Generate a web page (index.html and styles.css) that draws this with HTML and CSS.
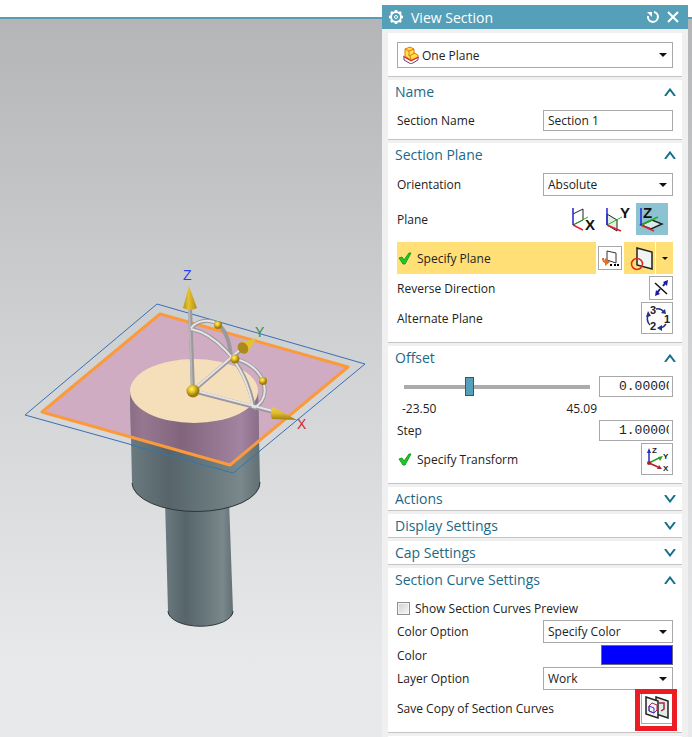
FILE: index.html
```html
<!DOCTYPE html>
<html lang="en">
<head>
  <meta charset="UTF-8" />
  <meta name="viewport" content="width=device-width, initial-scale=1.0" />
  <title>View Section</title>
  <link rel="stylesheet" href="styles.css">
</head>
<body>
  <main class="viewport">
    <svg class="scene" viewBox="0 19 382 718" preserveAspectRatio="xMinYMin meet" role="img" aria-label="Sectioned part">
      <defs>
        <linearGradient id="steel">
          <stop offset="0" stop-color="#6b7a7f" />
          <stop offset="0.3" stop-color="#57656a" />
          <stop offset="0.6" stop-color="#68777b" />
          <stop offset="0.85" stop-color="#7a888c" />
          <stop offset="1" stop-color="#617074" />
        </linearGradient>
        <linearGradient id="tinted">
          <stop offset="0" stop-color="#8a6d86" />
          <stop offset="0.1" stop-color="#967790" />
          <stop offset="0.4" stop-color="#82647d" />
          <stop offset="0.85" stop-color="#a384a0" />
          <stop offset="1" stop-color="#8a6c88" />
        </linearGradient>
        <linearGradient id="gold">
          <stop offset="0" stop-color="#b8931c" />
          <stop offset="0.4" stop-color="#e6c22f" />
          <stop offset="1" stop-color="#b08d1a" />
        </linearGradient>
        <linearGradient id="goldX" x2="0" y2="1">
          <stop offset="0" stop-color="#f0cf3c" />
          <stop offset="0.5" stop-color="#dcb92c" />
          <stop offset="1" stop-color="#9c7c14" />
        </linearGradient>
        <radialGradient id="ball" cx="0.4" cy="0.35">
          <stop offset="0" stop-color="#fff07a" />
          <stop offset="0.5" stop-color="#e5c122" />
          <stop offset="1" stop-color="#9c7d10" />
        </radialGradient>
        <clipPath id="planeClip">
          <path d="M160 314L348 367L230 465L42 412Z" />
        </clipPath>
      </defs>

      <!-- section plane -->
      <path d="M157 304L365 364L233 473L25 415Z" fill="none" stroke="#3a6db5" />
      <path d="M160 314L348 367L230 465L42 412Z" fill="#cfacc1" />

      <!-- part -->
      <path d="M165 500L168 611A32 15 0 0 0 233 611L229 500Z" fill="url(#steel)" />
      <path d="M168 611A32 15 0 0 0 233 611" fill="none" stroke="#2d3639" />
      <path d="M130 391L132 483A64 29 0 0 0 260 482L258 391Z" fill="url(#steel)" />
      <path d="M132 483A64 29 0 0 0 260 482" fill="none" stroke="#2d3639" />
      <path d="M130 391L132 483A64 29 0 0 0 260 482L258 391Z" fill="url(#tinted)" clip-path="url(#planeClip)" />
      <ellipse cx="194" cy="391" rx="64" ry="32" fill="#f5dfbb" />
      <path d="M131 445L233 473L260 451" fill="none" stroke="#2f76b0" />
      <path d="M160 314L348 367L230 465L42 412Z" fill="none" stroke="#fb9a3c" stroke-width="3" stroke-linejoin="round" />

      <!-- manipulator -->
      <g fill="none" stroke="#9b999c" stroke-width="4">
        <path d="M193 391L190 308" />
        <path d="M193 391L242 349" />
        <path d="M193 391L273 412" />
        <path d="M191 329C196 321 208 318 218 324C226 331 230 341 231 358" />
        <path d="M191 329C211 333 245 358 254 408" />
        <path d="M235 359C247 362 259 370 263 381C267 393 264 402 254 409" />
      </g>
      <g fill="none" stroke="#e6e4e6" stroke-width="2">
        <path d="M192 391L189 308" stroke="#b5b4b6" />
        <path d="M193 390L242 348" />
        <path d="M193 390L273 411" />
        <path d="M191 328C196 321 208 318 218 324" />
        <path d="M191 329C211 333 244 357 253 408" />
        <path d="M235 359C247 361 259 370 263 381C267 393 264 402 254 408" />
      </g>
      <path d="M189 286L197 308Q190 312 183 308Z" fill="url(#gold)" />
      <path d="M257 338L240 343L247 353Z" fill="#e6c22f" />
      <ellipse cx="243" cy="348" rx="5" ry="6" transform="rotate(-35 243 348)" fill="#ab8a1b" />
      <path d="M297 420L273 407Q269 413 272 419Z" fill="url(#goldX)" />
      <circle cx="193" cy="391" r="6.5" fill="url(#ball)" />
      <circle cx="218" cy="325" r="4" fill="url(#ball)" />
      <circle cx="235" cy="359" r="4.5" fill="url(#ball)" />
      <circle cx="263" cy="381" r="4" fill="url(#ball)" />
      <text class="axis" x="183" y="280" fill="#2b3ff0">Z</text>
      <text class="axis" x="255" y="337" fill="#2f8f4e">Y</text>
      <text class="axis" x="297" y="429" fill="#d02a35">X</text>
    </svg>
  </main>

  <form class="dialog">
    <header class="titlebar">
      <svg width="16" height="16" viewBox="0 0 16 16" fill="none" stroke="#fff">
        <circle cx="8" cy="8" r="5" stroke-width="2" />
        <circle cx="8" cy="8" r="1.5" stroke-width="1" />
        <path d="M8 1v2M8 13v2M1 8h2M13 8h2M3 3l1.5 1.5M11.5 11.5L13 13M13 3l-1.5 1.5M4.5 11.5L3 13" stroke-width="2.5" />
      </svg>
      <h1>View Section</h1>
      <button type="button" class="tb-btn" aria-label="Reset">
        <svg width="14" height="14" viewBox="0 0 14 14" fill="none" stroke="#fff" stroke-width="2">
          <path d="M8 2A5 5 0 1 1 2 6" />
          <path d="M1 2h5v5Z" fill="#fff" stroke="none" />
        </svg>
      </button>
      <button type="button" class="tb-btn" aria-label="Close">
        <svg width="14" height="14" viewBox="0 0 14 14" stroke="#fff" stroke-width="2">
          <path d="M2 2l10 10M12 2L2 12" />
        </svg>
      </button>
    </header>

    <div class="sections">
      <section class="card type-card">
        <div class="combo">
          <svg width="18" height="18" viewBox="0 0 18 18">
            <path d="M2 11v3l7 4 7-4v-3l-7 3Z" fill="#fff" stroke="#7a3a7a" />
            <path d="M3 3l5-2 4 2v4l4 2v2l-7 3-6-4Z" fill="#ffe04a" stroke="#e07a10" />
            <path d="M3 3l4 2v5l6-3M7 5l5-2M8 10l1 4" fill="none" stroke="#e07a10" />
            <path d="M1 10l8 5 8-4" fill="none" stroke="#e02020" />
          </svg>
          <select aria-label="Type"><option>One Plane</option></select>
        </div>
      </section>

      <section class="card">
        <button type="button" class="head" aria-expanded="true">Name
          <svg class="chev" viewBox="0 0 12 8"><path d="M1 8L6 1.5L11 8" /></svg></button>
        <div class="rows">
          <div class="row">
            <label for="secName">Section Name</label>
            <input type="text" id="secName" class="field wide" value="Section 1" />
          </div>
        </div>
      </section>

      <section class="card">
        <button type="button" class="head" aria-expanded="true">Section Plane
          <svg class="chev" viewBox="0 0 12 8"><path d="M1 8L6 1.5L11 8" /></svg></button>
        <div class="rows">
          <div class="row">
            <label for="orient">Orientation</label>
            <div class="combo wide"><select id="orient"><option>Absolute</option></select></div>
          </div>
          <div class="row plane-row">
            <span class="label">Plane</span>
            <button type="button" class="plane-btn" aria-label="X plane">
              <svg width="32" height="32" viewBox="0 0 32 32" fill="none">
                <path d="M5 11L15 6V17L5 22" stroke="#222" />
                <path d="M5 22L20 14" stroke="#22b022" />
                <path d="M5 22L15 27" stroke="#e02030" stroke-width="1.5" />
                <path d="M5 5V22" stroke="#2222d8" stroke-width="1.5" />
                <text x="17" y="27" class="glyph">X</text>
              </svg>
            </button>
            <button type="button" class="plane-btn" aria-label="Y plane">
              <svg width="32" height="32" viewBox="0 0 32 32" fill="none">
                <path d="M5 11L15 17V28L5 22Z" fill="#dff0e0" stroke="#222" />
                <path d="M5 22L20 14" stroke="#22b022" />
                <path d="M5 22L19 28" stroke="#e02030" stroke-width="1.5" />
                <path d="M5 5V22" stroke="#2222d8" stroke-width="1.5" />
                <text x="18" y="15" class="glyph">Y</text>
              </svg>
            </button>
            <button type="button" class="plane-btn selected" aria-label="Z plane" aria-pressed="true">
              <svg width="32" height="32" viewBox="0 0 32 32" fill="none">
                <path d="M5 22L16 17L26 21L15 26Z" fill="#d8ecea" stroke="#222" stroke-width="1.5" />
                <path d="M5 22L22 14" stroke="#22b022" stroke-width="1.5" />
                <path d="M5 22L18 28" stroke="#e02030" stroke-width="1.5" />
                <path d="M5 5V22" stroke="#2222d8" stroke-width="1.5" />
                <text x="7" y="15" class="glyph">Z</text>
              </svg>
            </button>
          </div>
          <div class="row specify">
            <div class="active-step">
              <svg class="check" viewBox="0 0 14 14"><path d="M1 7l3-1 2 3 5-7 2 0L7 13H5Z" /></svg>
              <span>Specify Plane</span>
            </div>
            <button type="button" class="tool small" aria-label="Plane dialog">
              <svg width="22" height="22" viewBox="0 0 22 22" fill="none">
                <path d="M8 4l9 2v10l-9-3Z" stroke="#333" />
                <path d="M4 11c0 3 1 4 3 4" stroke="#e07020" stroke-width="2" />
                <path d="M6 11l5 4-5 4Z" fill="#e07020" />
                <path d="M11 18h2M15 18h2M18 18h2" stroke="#000" stroke-width="2" />
              </svg>
            </button>
            <div class="split">
              <button type="button" class="split-main" aria-label="Inferred plane">
                <svg width="30" height="32" viewBox="0 0 30 32" fill="none">
                  <path d="M12 6L27 10V27L12 23Z" fill="#eef5f2" stroke="#222" stroke-width="1.5" />
                  <circle cx="12" cy="22" r="5.5" stroke="#e02818" stroke-width="1.5" />
                </svg>
              </button>
              <button type="button" class="split-menu" aria-label="More plane types"></button>
            </div>
          </div>
          <div class="row">
            <span class="label">Reverse Direction</span>
            <button type="button" class="tool small" aria-label="Reverse Direction">
              <svg width="22" height="22" viewBox="0 0 22 22" fill="none">
                <path d="M5 6L17 17" stroke="#111" stroke-width="1.5" />
                <path d="M7 16l3-4M13 9l3-4" stroke="#1a1aa8" stroke-width="2" />
                <path d="M18 3l-1 6-4-4ZM5 19l1-6 4 4Z" fill="#1a1aa8" />
              </svg>
            </button>
          </div>
          <div class="row">
            <span class="label">Alternate Plane</span>
            <button type="button" class="tool" aria-label="Alternate Plane">
              <svg width="30" height="30" viewBox="0 0 30 30" fill="none">
                <path d="M14 6q5-1 8 3M24 21q-2 3-5 4M8 22q-4-4-2-10" stroke="#22338a" stroke-width="1.5" />
                <path d="M24 11l-5-1 4-4ZM15 25l5-3v6ZM6 8l3 5-5 1Z" fill="#22338a" />
                <text x="8" y="11" class="num">3</text>
                <text x="22" y="20" class="num">1</text>
                <text x="8" y="27" class="num">2</text>
              </svg>
            </button>
          </div>
        </div>
      </section>

      <section class="card">
        <button type="button" class="head" aria-expanded="true">Offset
          <svg class="chev" viewBox="0 0 12 8"><path d="M1 8L6 1.5L11 8" /></svg></button>
        <div class="rows">
          <div class="row">
            <input type="range" class="slider" min="-23.5" max="45.09" step="0.01" value="0" aria-label="Offset" />
            <input type="text" class="field number" value="0.00000" aria-label="Offset value" />
          </div>
          <div class="limits"><span>-23.50</span><span>45.09</span></div>
          <div class="row">
            <label for="step">Step</label>
            <input type="text" id="step" class="field number" value="1.00000" />
          </div>
          <div class="row">
            <div class="step-label">
              <svg class="check" viewBox="0 0 14 14"><path d="M1 7l3-1 2 3 5-7 2 0L7 13H5Z" /></svg>
              <span>Specify Transform</span>
            </div>
            <button type="button" class="tool" aria-label="Specify Transform">
              <svg width="30" height="30" viewBox="0 0 30 30" fill="none">
                <path d="M7 19V7" stroke="#2030c0" stroke-width="1.5" />
                <path d="M7 4l2 5H5Z" fill="#2030c0" />
                <path d="M7 19L17 14" stroke="#28a028" stroke-width="1.5" />
                <path d="M21 12l-3 5-2-4Z" fill="#28a028" />
                <path d="M7 19L16 23" stroke="#b02028" stroke-width="1.5" />
                <path d="M20 25l-5 0 2-4Z" fill="#b02028" />
                <circle cx="7" cy="19" r="2" fill="#b02028" />
                <text x="10" y="9" class="tiny">Z</text>
                <text x="21" y="15" class="tiny">Y</text>
                <text x="21" y="27" class="tiny">X</text>
              </svg>
            </button>
          </div>
        </div>
      </section>

      <section class="card">
        <button type="button" class="head" aria-expanded="false">Actions
          <svg class="chev" viewBox="0 0 12 8"><path d="M1 0L6 6.5L11 0" /></svg></button>
      </section>
      <section class="card">
        <button type="button" class="head" aria-expanded="false">Display Settings
          <svg class="chev" viewBox="0 0 12 8"><path d="M1 0L6 6.5L11 0" /></svg></button>
      </section>
      <section class="card">
        <button type="button" class="head" aria-expanded="false">Cap Settings
          <svg class="chev" viewBox="0 0 12 8"><path d="M1 0L6 6.5L11 0" /></svg></button>
      </section>

      <section class="card">
        <button type="button" class="head" aria-expanded="true">Section Curve Settings
          <svg class="chev" viewBox="0 0 12 8"><path d="M1 8L6 1.5L11 8" /></svg></button>
        <div class="rows">
          <label class="tick"><input type="checkbox" />Show Section Curves Preview</label>
          <div class="row">
            <label for="colorOpt">Color Option</label>
            <div class="combo wide"><select id="colorOpt"><option>Specify Color</option></select></div>
          </div>
          <div class="row">
            <span class="label">Color</span>
            <button type="button" class="swatch" aria-label="Color"></button>
          </div>
          <div class="row">
            <label for="layerOpt">Layer Option</label>
            <div class="combo wide"><select id="layerOpt"><option>Work</option></select></div>
          </div>
          <div class="row">
            <span class="label">Save Copy of Section Curves</span>
            <button type="button" class="tool marked" aria-label="Save Copy of Section Curves">
              <svg width="30" height="30" viewBox="0 0 30 30" fill="none">
                <path d="M14 4L26 8V25L14 21Z" fill="#dcefe4" stroke="#222" stroke-width="1.5" />
                <path d="M17 10l5 0v6l-3 2" stroke="#c01848" stroke-width="1.5" />
                <path d="M4 4L16 8V25L4 21Z" fill="#eef5f2" stroke="#222" stroke-width="1.5" />
                <path d="M7 13l3-3 5 2v5l-3 3-5-2Z" stroke="#c01848" />
                <path d="M7 13l5 2v5l-5-2Z" stroke="#3038c8" />
              </svg>
            </button>
          </div>
        </div>
      </section>
      <section class="card"></section>
    </div>
  </form>
</body>
</html>
```

FILE: styles.css
```css
*, *::before, *::after { box-sizing: border-box; }
html, body { height: 100%; }
body { margin: 0; padding-top: 17px; overflow: hidden; background: #fff; font: 12px "Open Sans", "Noto Sans", sans-serif; color: #222; }
button, input, select { font: inherit; color: inherit; margin: 0; padding: 0; border: none; border-radius: 0; }
button { cursor: pointer; background: none; }
svg { display: block; flex: none; }

.viewport { height: 100%; border-top: 2px solid #5a9db3; background: linear-gradient(#b4b5b6, #d0d1d2 45%, #e8e9ea 90%); }
.scene { width: calc(100% - 310px); height: 100%; }
.axis { font-size: 14px; font-family: "Liberation Sans", Arial, sans-serif; }

/* dialog window */
.dialog { position: absolute; top: 5px; right: 4px; width: 306px; background: #f0f0f0; }
.titlebar { display: flex; align-items: center; gap: 6px; height: 24px; padding: 0 8px 0 6px; background: #55a0b8; color: #fff; }
.titlebar h1 { flex: 1; margin: 0; font-size: 14px; font-weight: normal; padding-left: 1px; }
.sections { display: flex; flex-direction: column; gap: 3px; padding: 4px 6px; }
.card { min-height: 24px; background: #fff; border-bottom: 1px solid #c4c4c4; }
.type-card { padding: 9px 9px 8px; }

.head { display: flex; align-items: center; justify-content: space-between; width: 100%; height: 23px; padding: 0 6px 0 7px; font-size: 14px; color: #1b6986; }
.chev { width: 12px; height: 8px; fill: none; stroke: #14708a; stroke-width: 2; }

.rows { display: flex; flex-direction: column; gap: 2px; padding: 7px 9px 8px; }
.row { display: flex; align-items: center; gap: 2px; }
.row > label, .row > .label { flex: 1; }

.combo { position: relative; display: flex; align-items: center; height: 23px; padding-left: 4px; border: 1px solid #a8a8a8; background: #fff; }
.combo select { flex: 1; height: 100%; appearance: none; background: none; outline: none; }
.combo::after, .split-menu::after { content: ""; border: 4px solid transparent; border-top-color: #111; border-bottom: none; }
.combo::after { position: absolute; right: 5px; top: 50%; margin-top: -2px; pointer-events: none; }
.split-menu::after { border-width: 3px; }
.type-card .combo { height: 26px; gap: 2px; }
.wide { width: 130px; }
.field { height: 21px; padding: 0 4px; border: 1px solid #a8a8a8; background: #fff; outline: none; }
.number { width: 74px; padding: 0 3px 0 19px; font: 13px "Liberation Mono", monospace; }

.plane-row { height: 42px; padding-right: 5px; }
.plane-btn { width: 32px; height: 32px; }
.selected { background: #8cc3d2; }
.glyph { font: bold 15px "Liberation Sans", Arial, sans-serif; fill: #111; }
.num { font: bold 11px "Liberation Sans", Arial, sans-serif; fill: #222; }
.tiny { font: bold 8px "Liberation Sans", Arial, sans-serif; fill: #222; }

.check { width: 14px; height: 14px; fill: #1fc72a; stroke: #18a022; stroke-width: 1; }
.active-step, .step-label { flex: 1; display: flex; align-items: center; gap: 5px; height: 32px; padding-left: 1px; }
.active-step { background: #ffdf76; }
.tool { display: flex; align-items: center; justify-content: center; width: 32px; height: 32px; border: 1px solid #a8a8a8; background: #fff; }
.small { width: 24px; height: 24px; }
.split { display: flex; gap: 1px; }
.split button { display: flex; align-items: center; justify-content: center; height: 32px; background: #ffdf76; }
.split-main { width: 31px; }
.split-menu { width: 17px; }

.slider { flex: 1; height: 21px; margin: 0 7px; appearance: none; background: linear-gradient(#ababab, #ababab) center / 100% 4px no-repeat; }
.slider::-webkit-slider-thumb { appearance: none; width: 9px; height: 19px; background: #55a0b8; border: 1px solid #3d5560; }
.limits { display: flex; justify-content: space-between; align-items: center; height: 19px; padding: 0 76px 0 5px; }

.tick { display: flex; align-items: center; gap: 5px; height: 20px; }
.tick input { appearance: none; width: 13px; height: 13px; border: 1px solid #8e8f8f; background: linear-gradient(135deg, #cfd1d4, #f6f6f6); box-shadow: inset 0 0 0 1px #f4f4f4; }
.swatch { width: 72px; height: 20px; background: #0000fe; border: 1px solid #6a6a80; }

/* highlight frame over the save button */
.marked { position: relative; }
.marked::after { content: ""; position: absolute; top: -4px; left: -7px; width: 42px; height: 42px; border: 5px solid #ec1c24; }
```
